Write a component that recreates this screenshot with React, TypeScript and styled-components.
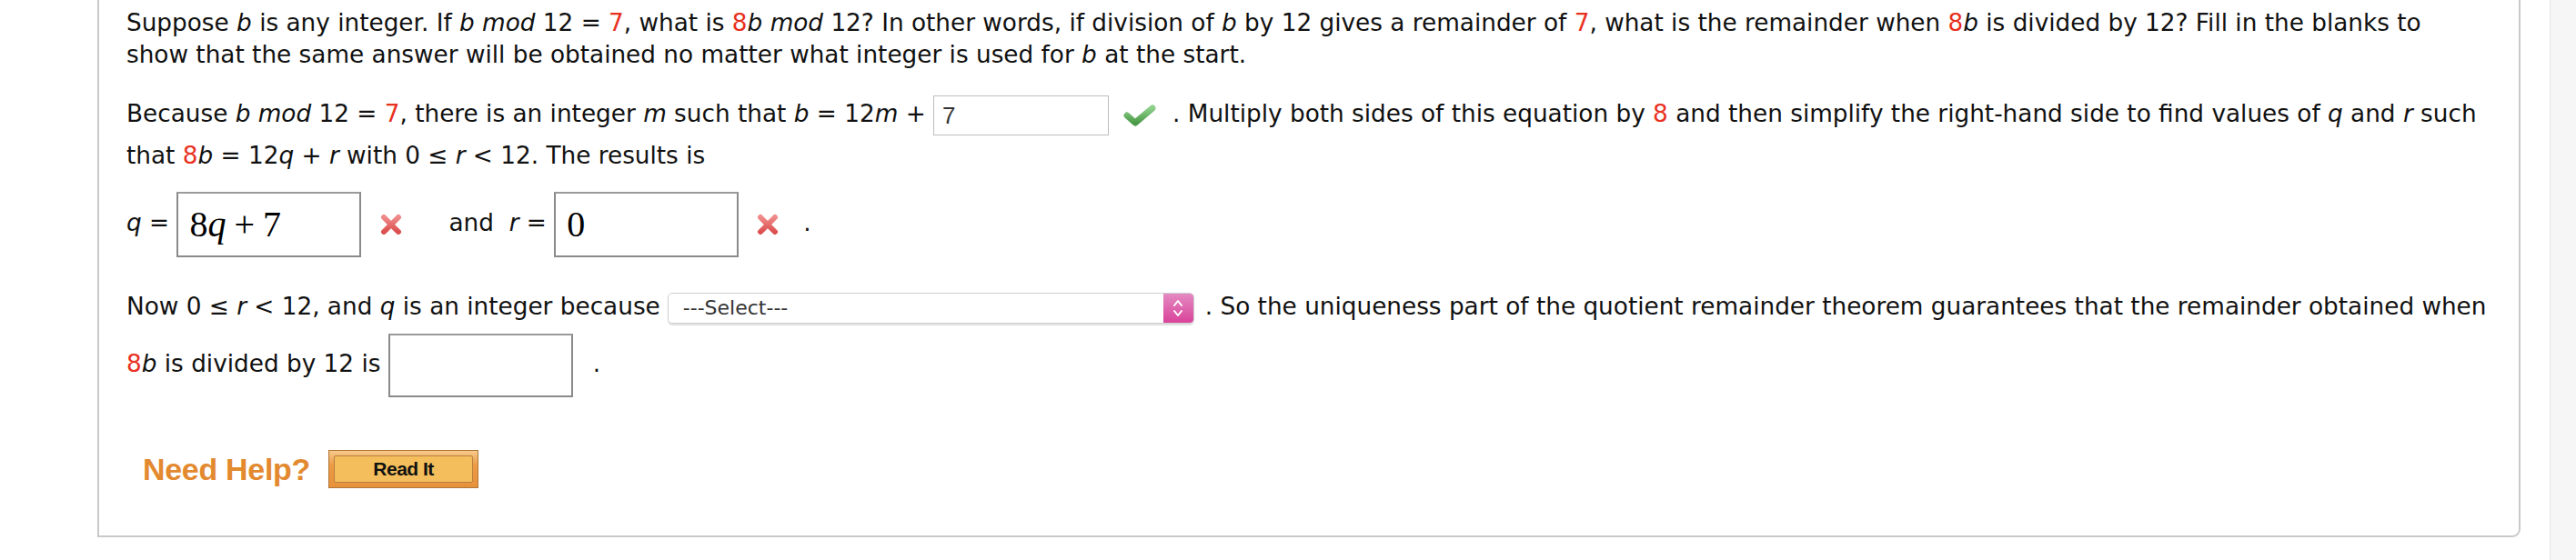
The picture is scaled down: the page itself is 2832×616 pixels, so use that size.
import React from "react"
import styled, { createGlobalStyle } from "styled-components"

const Global = createGlobalStyle`
  html, body { margin: 0; padding: 0; background: #fff; }
  body { width: 2832px; height: 616px; overflow: hidden; }
`

const Page = styled.div`
  display: flex;
  width: 2832px;
  height: 616px;
`

const Main = styled.div`
  flex: 1;
  padding-left: 107px;
  padding-right: 32px;
`

// right hand scroll track
const Track = styled.div`
  width: 28px;
  background: #f6f6f6;
  border-left: 1px solid #e6e6e6;
`

const Card = styled.div`
  box-sizing: border-box;
  height: 591px;
  border: 2px solid #c9c9c9;
  border-top: none;
  border-bottom-right-radius: 9px;
  padding: 8px 0 0 30px;
  font-family: "DejaVu Sans", Verdana, sans-serif;
  font-size: 26.3px;
  color: #111;
`

interface ILine {
  h: number
  gap?: number
}

const Line = styled.div<ILine>`
  height: ${(p) => p.h}px;
  line-height: ${(p) => p.h}px;
  margin-top: ${(p) => p.gap || 0}px;
  white-space: nowrap;
`

const Red = styled.span`
  color: #e8311f;
`

const V = styled.i`
  font-style: italic;
`

interface IBox {
  w: number
  h: number
}

const AnswerBox = styled.span<IBox>`
  display: inline-block;
  box-sizing: border-box;
  vertical-align: middle;
  width: ${(p) => p.w}px;
  height: ${(p) => p.h}px;
  border: 1px solid #bdbdbd;
  font-family: "Liberation Sans", Arial, sans-serif;
  font-size: 26px;
  line-height: ${(p) => p.h - 2}px;
  padding-left: 9px;
  color: #333;
`

const MathBox = styled.span<IBox>`
  display: inline-block;
  box-sizing: border-box;
  vertical-align: middle;
  width: ${(p) => p.w}px;
  height: ${(p) => p.h}px;
  border: 2px solid #8a8a8a;
  border-top-color: #9a9a9a;
  font-family: "Liberation Serif", "Times New Roman", serif;
  font-size: 40px;
  line-height: ${(p) => p.h - 4}px;
  padding-left: 12px;
  color: #000;
`

const Op = styled.span`
  margin: 0 9px;
`

const IconWrap = styled.span<{ ml: number; mr: number }>`
  display: inline-block;
  vertical-align: middle;
  margin-left: ${(p) => p.ml}px;
  margin-right: ${(p) => p.mr}px;
  line-height: 0;
`

const Check: React.FC = () => (
  <svg width="36" height="26" viewBox="0 0 36 26">
    <defs>
      <linearGradient id="gk" x1="0" y1="0" x2="0" y2="1">
        <stop offset="0" stopColor="#8fd08a" />
        <stop offset="1" stopColor="#4a9a48" />
      </linearGradient>
    </defs>
    <path d="M4 13 L13 21 L32 5" fill="none" stroke="url(#gk)" strokeWidth="7" strokeLinecap="round" strokeLinejoin="round" />
  </svg>
)

const Cross: React.FC = () => (
  <svg width="26" height="26" viewBox="0 0 26 26">
    <defs>
      <linearGradient id="gx" x1="0" y1="0" x2="0" y2="1">
        <stop offset="0" stopColor="#ef8a8a" />
        <stop offset="1" stopColor="#dc4f4f" />
      </linearGradient>
    </defs>
    <path d="M5 5 L21 21 M21 5 L5 21" fill="none" stroke="url(#gx)" strokeWidth="6" strokeLinecap="round" />
  </svg>
)

const Select = styled.span`
  display: inline-flex;
  vertical-align: middle;
  box-sizing: border-box;
  width: 579px;
  height: 34px;
  border: 1px solid #cfcfcf;
  border-radius: 5px;
  box-shadow: 0 2px 1px rgba(0, 0, 0, 0.12);
  overflow: hidden;
  margin-left: 8px;
  margin-right: 12px;
`

const SelectText = styled.span`
  flex: 1;
  font-size: 22px;
  line-height: 32px;
  padding-left: 16px;
  color: #333;
`

const SelectArrow = styled.span`
  width: 33px;
  display: flex;
  align-items: center;
  justify-content: center;
  background: linear-gradient(#e48ac1, #d9439a);
`

const HelpRow = styled.div`
  display: flex;
  align-items: center;
  gap: 20px;
  margin-top: 59px;
  padding-left: 18px;
  height: 42px;
`

const HelpLabel = styled.span`
  font-family: "Liberation Sans", Arial, sans-serif;
  font-weight: bold;
  font-size: 34px;
  color: #e3892f;
  letter-spacing: -0.3px;
`

const ReadIt = styled.button`
  box-sizing: border-box;
  width: 165px;
  height: 42px;
  padding: 5px;
  border: 1px solid #b0773a;
  background: linear-gradient(#f7c98a, #ec9a45 40%, #e8913c);
  cursor: pointer;
`

const ReadItInner = styled.span`
  display: block;
  box-sizing: border-box;
  height: 100%;
  border: 1px solid #b9803f;
  border-radius: 2px;
  background: #f3be5b;
  font-family: "Liberation Sans", Arial, sans-serif;
  font-weight: bold;
  font-size: 21px;
  line-height: 28px;
  color: #111;
  letter-spacing: -0.5px;
`

export default function App() {
  return (
    <Page>
      <Global />
      <Main>
        <Card>
          <Line h={35}>
            Suppose <V>b</V> is any integer. If <V>b mod</V> 12 = <Red>7</Red>, what is <Red>8</Red><V>b mod</V> 12? In other words, if division of <V>b</V> by 12 gives a remainder of <Red>7</Red>, what is the remainder when <Red>8</Red><V>b</V> is divided by 12? Fill in the blanks to
          </Line>
          <Line h={35}>
            show that the same answer will be obtained no matter what integer is used for <V>b</V> at the start.
          </Line>

          <Line h={46} gap={24}>
            Because <V>b mod</V> 12 = <Red>7</Red>, there is an integer <V>m</V> such that <V>b</V> = 12<V>m</V> +{" "}
            <AnswerBox w={193} h={44}>7</AnswerBox>
            <IconWrap ml={16} mr={18}><Check /></IconWrap>
            . Multiply both sides of this equation by <Red>8</Red> and then simplify the right-hand side to find values of <V>q</V> and <V>r</V> such
          </Line>
          <Line h={46}>
            that <Red>8</Red><V>b</V> = 12<V>q</V> + <V>r</V> with 0 ≤ <V>r</V> &lt; 12. The results is
          </Line>

          <Line h={72} gap={15}>
            <V>q</V> ={" "}
            <MathBox w={203} h={72}>8<V>q</V><Op>+</Op>7</MathBox>
            <IconWrap ml={20} mr={50}><Cross /></IconWrap>
            and&nbsp; <V>r</V> ={" "}
            <MathBox w={203} h={72}>0</MathBox>
            <IconWrap ml={19} mr={26}><Cross /></IconWrap>
            .
          </Line>

          <Line h={46} gap={33}>
            Now 0 ≤ <V>r</V> &lt; 12, and <V>q</V> is an integer because
            <Select>
              <SelectText>---Select---</SelectText>
              <SelectArrow>
                <svg width="14" height="24" viewBox="0 0 14 24">
                  <path d="M3 9 L7 4 L11 9 M3 15 L7 20 L11 15" fill="none" stroke="#fff" strokeWidth="2" strokeLinecap="round" strokeLinejoin="round" />
                </svg>
              </SelectArrow>
            </Select>
            . So the uniqueness part of the quotient remainder theorem guarantees that the remainder obtained when
          </Line>
          <Line h={72} gap={4}>
            <Red>8</Red><V>b</V> is divided by 12 is{" "}
            <MathBox w={203} h={70} />
            <span style={{ marginLeft: 22 }}>.</span>
          </Line>

          <HelpRow>
            <HelpLabel>Need Help?</HelpLabel>
            <ReadIt>
              <ReadItInner>Read It</ReadItInner>
            </ReadIt>
          </HelpRow>
        </Card>
      </Main>
      <Track />
    </Page>
  )
}
